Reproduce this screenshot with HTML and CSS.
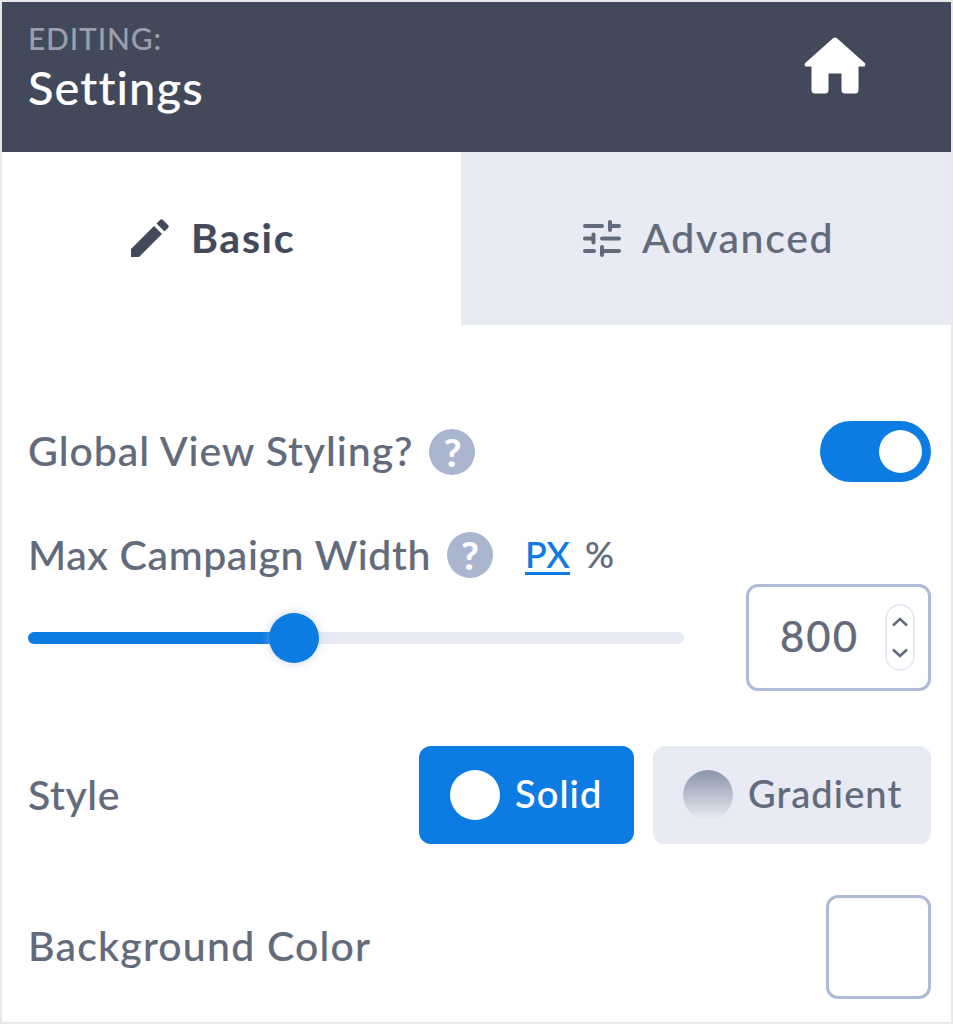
FILE: index.html
```
<!DOCTYPE html>
<html lang="en">
<head>
    <meta charset="UTF-8">
    <meta name="viewport" content="width=device-width, initial-scale=1.0">
    <title>Settings</title>
    <link rel="stylesheet" href="styles.css">
</head>
<body>

    <div class="panel">
        <div class="header">
            <div>
                <div class="header-label">EDITING:</div>
                <h1>Settings</h1>
            </div>
            <a href="#" class="home">
                <svg width="62" height="58" viewBox="0 0 62 58" fill="#fff">
                    <path d="M29 1.200Q31 -.3 33 1.200L61 26.200Q62.200 29.600 59.500 29.600H54.500V53Q54.500 56.500 51 56.500H41Q37.500 56.500 37.500 53V36.500H24.500V53Q24.500 56.500 21 56.500H11Q7.500 56.500 7.500 53V29.600H2.500Q-.2 29.600 1 26.200Z"/>
                </svg>
            </a>
        </div>

        <div class="tabs">
            <div class="tab active">
                <svg class="icon-pencil" width="38" height="38" viewBox="0 0 38 38" fill="#42495b">
                    <path d="M0 30L23 7L31 15L8 38H0Z"/>
                    <path d="M25.500 4.500L29 1Q30.500-.5 32 1L37 6Q38.500 7.500 37 9L33.500 12.500Z"/>
                </svg>
                <span class="tab-basic">Basic</span>
            </div>
            <div class="tab">
                <svg class="icon-tune" width="38" height="38" viewBox="0 0 38 38" fill="none" stroke="#626b7c" stroke-width="4" stroke-linecap="round">
                    <path d="M2 6H19M27 2V10M27 6H36M2 18.500H10M10.500 14.500V22.500M19 18.500H36M2 31H11M19 27V35M19 31H36"/>
                </svg>
                <span class="tab-advanced">Advanced</span>
            </div>
        </div>

        <div class="content">
            <div class="row row-global">
                <div class="label"><span class="text-global">Global View Styling?</span><span class="help">?</span></div>
                <div class="toggle"><div class="toggle-knob"></div></div>
            </div>

            <div class="row row-width">
                <div class="label"><span class="text-width">Max Campaign Width</span><span class="help">?</span></div>
                <div class="units">
                    <span class="unit selected">PX</span>
                    <span class="unit">%</span>
                </div>
            </div>

            <div class="row row-slider">
                <div class="slider">
                    <div class="slider-fill"></div>
                    <div class="slider-thumb"></div>
                </div>
                <div class="number">
                    <span class="number-value">800</span>
                    <div class="stepper">
                        <svg width="16" height="10" viewBox="0 0 16 10"><path d="M1 8.500L8 2L15 8.500"/></svg>
                        <svg width="16" height="10" viewBox="0 0 16 10"><path d="M1 1.500L8 8L15 1.500"/></svg>
                    </div>
                </div>
            </div>

            <div class="row row-style">
                <div class="label"><span class="text-style">Style</span></div>
                <div class="buttons">
                    <div class="btn btn-solid"><span class="dot"></span><span class="btn-text">Solid</span></div>
                    <div class="btn btn-gradient"><span class="dot"></span><span class="btn-text">Gradient</span></div>
                </div>
            </div>

            <div class="row row-color">
                <div class="label"><span class="text-color">Background Color</span></div>
                <div class="swatch"></div>
            </div>
        </div>
    </div>

</body>
</html>
```
FILE: styles.css
```
* {
    box-sizing: border-box;
}
body {
    margin: 0;
    background: #fff;
    font-family: Lato, "Liberation Sans", sans-serif;
    font-weight: 500;
    font-variant-ligatures: none;
    color: #626b7c;
    -webkit-text-stroke: 0.15px;
}
.panel {
    height: 1024px;
    border: 2px solid #e8e8e8;
    background: #fff;
    overflow: hidden;
}
.header {
    height: 150px;
    padding: 19px 85px 0 26px;
    display: flex;
    justify-content: space-between;
    background: #42495b;
}
.header-label {
    font-size: 30px;
    line-height: 34px;
    letter-spacing: 0.8px;
    color: #9a9fab;
    -webkit-text-stroke: 0;
}
h1 {
    margin: 2px 0 0;
    font-size: 47px;
    line-height: 60px;
    font-weight: 500;
    letter-spacing: 1.1px;
    color: #fff;
}
.home {
    margin-top: 16px;
}
.home svg {
    display: block;
}
.tabs {
    height: 173px;
    display: flex;
}
.tab {
    flex: 1;
    display: flex;
    align-items: center;
    padding-left: 122px;
    background: #e8ebf3;
    font-size: 41px;
}
.tab.active {
    flex: none;
    width: 459px;
    padding-left: 129px;
    background: #fff;
    color: #42495b;
    font-weight: 700;
}
.tab span {
    padding-bottom: 3px;
}
.tab-basic {
    letter-spacing: 1.7px;
}
.tab-advanced {
    letter-spacing: 1.7px;
}
.icon-pencil {
    margin: 0 22px 2px 0;
}
.icon-tune {
    margin-right: 21px;
}
.content {
    padding: 96px 20px 0 26px;
}
.row {
    display: flex;
    align-items: center;
    justify-content: space-between;
}
.label {
    display: flex;
    align-items: center;
    font-size: 41px;
    line-height: 48px;
    white-space: nowrap;
}
.text-global,
.text-color {
    padding-bottom: 2px;
}
.text-global {
    letter-spacing: 0.95px;
}
.text-width {
    letter-spacing: 0.62px;
}
.text-style {
    letter-spacing: 0.6px;
}
.text-color {
    letter-spacing: 1.2px;
}
.help {
    width: 46px;
    height: 46px;
    margin-left: 16px;
    border-radius: 50%;
    background: #aab6d0;
    color: #fff;
    font-size: 39px;
    font-weight: 700;
    line-height: 46px;
    text-align: center;
}
.row-global {
    height: 61px;
}
.toggle {
    width: 111px;
    height: 61px;
    padding: 9px;
    border-radius: 31px;
    background: #0c7ce2;
    display: flex;
    justify-content: flex-end;
}
.toggle-knob {
    width: 43px;
    height: 43px;
    border-radius: 50%;
    background: #fff;
}
.row-width {
    height: 52px;
    margin-top: 47px;
    justify-content: flex-start;
}
.units {
    display: flex;
    margin-left: 32px;
    gap: 15px;
    font-size: 36px;
    line-height: 36px;
}
.unit.selected {
    color: #0c7ce2;
    border-bottom: 3px solid #0c7ce2;
}
.row-slider {
    height: 107px;
    margin-top: 3px;
}
.slider {
    position: relative;
    width: 656px;
    height: 12px;
    border-radius: 6px;
    background: #e8ebf3;
}
.slider-fill {
    width: 266px;
    height: 12px;
    border-radius: 6px 0 0 6px;
    background: #0c7ce2;
}
.slider-thumb {
    position: absolute;
    left: 241px;
    top: -19px;
    width: 50px;
    height: 50px;
    border-radius: 50%;
    background: #0c7ce2;
    box-shadow: 0 0 10px rgba(170, 182, 208, 0.6);
}
.number {
    width: 185px;
    height: 107px;
    padding: 0 13px 0 31px;
    border: 3px solid #aebbd6;
    border-radius: 12px;
    display: flex;
    align-items: center;
    justify-content: space-between;
    font-size: 42px;
}
.number-value {
    padding-bottom: 3px;
    letter-spacing: 2px;
}
.stepper {
    width: 30px;
    height: 67px;
    border: 2px solid #e8ebf3;
    border-radius: 15px;
    display: flex;
    flex-direction: column;
    align-items: center;
    justify-content: center;
    gap: 21px;
}
.stepper path {
    fill: none;
    stroke: #626b7c;
    stroke-width: 2.5;
}
.row-style {
    height: 98px;
    margin-top: 55px;
}
.buttons {
    display: flex;
    gap: 19px;
}
.btn {
    height: 98px;
    display: flex;
    align-items: center;
    border-radius: 12px;
    font-size: 38px;
    letter-spacing: 1.1px;
    white-space: nowrap;
}
.btn-text {
    padding-bottom: 4px;
}
.btn-solid {
    width: 215px;
    padding-left: 31px;
    background: #0c7ce2;
    color: #fff;
}
.btn-gradient {
    width: 278px;
    padding-left: 30px;
    background: #e8ebf3;
}
.dot {
    width: 50px;
    height: 50px;
    margin-right: 15px;
    border-radius: 50%;
    background: #fff;
}
.btn-gradient .dot {
    background: linear-gradient(#8a94aa, #e8ebf3);
}
.row-color {
    height: 104px;
    margin-top: 51px;
}
.swatch {
    width: 105px;
    height: 104px;
    border: 3px solid #aebbd6;
    border-radius: 12px;
    background: #fff;
}
```
